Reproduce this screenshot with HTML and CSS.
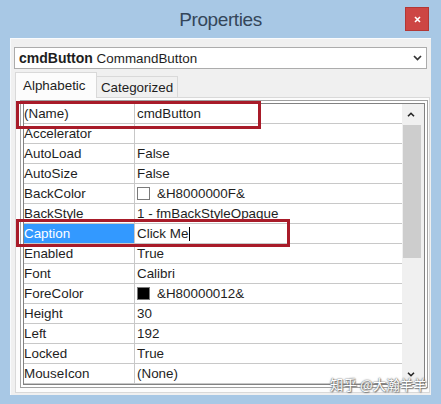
FILE: index.html
```html
<!DOCTYPE html>
<html>
<head>
<meta charset="utf-8">
<link rel="stylesheet" href="styles.css">
</head>
<body>
<div class="window">
  <div class="titlebar">
    <h1 class="title">Properties</h1>
    <div class="close"><svg width="7" height="7" viewBox="0 0 7 7"><path d="M1 1L6 6M6 1L1 6" stroke="#fff" stroke-width="1.6" fill="none"/></svg></div>
  </div>
  <div class="panel">
    <div class="combo">
      <span class="obj"><b>cmdButton</b> CommandButton</span>
      <svg width="9" height="6" viewBox="0 0 9 6"><path d="M1 1L4.5 4.5L8 1" fill="none" stroke="#333" stroke-width="1.7"/></svg>
    </div>
    <div class="tabs">
      <div class="tab active">Alphabetic</div>
      <div class="tab inactive">Categorized</div>
    </div>
    <div class="page">
      <div class="grid">
        <div class="grid-inner">
          <div class="rows">
            <div class="row"><div class="name">(Name)</div><div class="val">cmdButton</div></div>
            <div class="row"><div class="name">Accelerator</div><div class="val"></div></div>
            <div class="row"><div class="name">AutoLoad</div><div class="val">False</div></div>
            <div class="row"><div class="name">AutoSize</div><div class="val">False</div></div>
            <div class="row"><div class="name">BackColor</div><div class="val"><span class="swatch swatch-white"></span>&amp;H8000000F&amp;</div></div>
            <div class="row"><div class="name">BackStyle</div><div class="val">1 - fmBackStyleOpaque</div></div>
            <div class="row selected"><div class="name">Caption</div><div class="val">Click Me<span class="caret"></span></div></div>
            <div class="row"><div class="name">Enabled</div><div class="val">True</div></div>
            <div class="row"><div class="name">Font</div><div class="val">Calibri</div></div>
            <div class="row"><div class="name">ForeColor</div><div class="val"><span class="swatch swatch-black"></span>&amp;H80000012&amp;</div></div>
            <div class="row"><div class="name">Height</div><div class="val">30</div></div>
            <div class="row"><div class="name">Left</div><div class="val">192</div></div>
            <div class="row"><div class="name">Locked</div><div class="val">True</div></div>
            <div class="row"><div class="name">MouseIcon</div><div class="val">(None)</div></div>
          </div>
          <div class="scrollbar">
            <div class="sb-btn"><svg width="8" height="5" viewBox="0 0 8 5"><path d="M1 4.3L4 1.3L7 4.3" fill="none" stroke="#222" stroke-width="1.6"/></svg></div>
            <div class="thumb"></div>
            <div class="sb-space"></div>
            <div class="sb-btn"><svg width="8" height="5" viewBox="0 0 8 5"><path d="M1 0.7L4 3.7L7 0.7" fill="none" stroke="#222" stroke-width="1.6"/></svg></div>
          </div>
        </div>
      </div>
    </div>
    <div class="mark mark-name"></div>
    <div class="mark mark-caption"></div>
  </div>
  <div class="watermark">知乎 @大瀚羊羊</div>
</div>
</body>
</html>
```

FILE: styles.css
```css
body {
  margin: 0;
  background: #a8c8e5;
}

.window {
  position: relative;
  width: 441px;
  height: 404px;
  display: flex;
  flex-direction: column;
  background: #a8c8e5;
  font-family: "Liberation Sans", Arial, sans-serif;
  color: #1e1e1e;
  overflow: hidden;
}

.titlebar {
  height: 38px;
  display: grid;
  grid-template-columns: 1fr auto 1fr;
  align-items: start;
}

.title {
  grid-column: 2;
  margin: 0;
  padding-top: 2px;
  font-size: 19px;
  font-weight: normal;
  line-height: 36px;
  letter-spacing: -0.4px;
  color: #34465a;
}

.close {
  grid-column: 3;
  justify-self: end;
  margin: 7px 12px 0 0;
  width: 24px;
  height: 24px;
  box-sizing: border-box;
  background: #cd4644;
  border: 1px solid #b23735;
  display: flex;
  align-items: center;
  justify-content: center;
}

.panel {
  position: relative;
  flex: 1;
  margin: 0 10px 9px 10px;
  background: #f0f0f0;
  border-top: 1px solid #f9fbfd;
  border-left: 1px solid #f9fbfd;
  padding: 8px 1px 2px 3px;
  display: flex;
  flex-direction: column;
}

.combo {
  height: 22px;
  box-sizing: border-box;
  margin-right: 3px;
  border: 1px solid #acacac;
  background: #fff;
  display: flex;
  align-items: center;
  justify-content: space-between;
  padding: 0 4px;
  font-size: 13.4px;
}

.combo b {
  font-size: 14px;
}

.tabs {
  position: relative;
  z-index: 1;
  height: 25px;
  margin-top: 3px;
  margin-left: 1px;
  display: flex;
  align-items: flex-end;
}

.tab {
  box-sizing: border-box;
  height: 21px;
  border: 1px solid #d9d9d9;
  border-bottom: none;
  background: #f0f0f0;
  display: flex;
  align-items: center;
  justify-content: center;
  font-size: 13.4px;
}

.tab.active {
  width: 82px;
  height: 26px;
  margin-bottom: -1px;
  background: #fcfcfc;
  justify-content: flex-start;
  padding-left: 7px;
}

.tab.inactive {
  width: 81px;
  border-left: none;
}

.page {
  flex: 1;
  margin-left: 1px;
  border: 1px solid #d9d9d9;
  background: #fcfcfc;
  padding: 2px 1px 4px 4px;
  display: flex;
}

.grid {
  flex: 1;
  border: 1px solid #a0a0a0;
  padding: 2px;
  background: #fff;
  display: flex;
}

.grid-inner {
  flex: 1;
  border: 1px solid #828282;
  background: #fff;
  display: flex;
}

.rows {
  width: 378px;
}

.row {
  height: 20px;
  box-sizing: border-box;
  border-bottom: 1px solid #c8c8c8;
  display: flex;
  font-size: 13.4px;
}

.name {
  width: 111px;
  box-sizing: border-box;
  border-right: 1px solid #c8c8c8;
  display: flex;
  align-items: center;
  white-space: nowrap;
}

.val {
  flex: 1;
  padding-left: 2px;
  display: flex;
  align-items: center;
  white-space: nowrap;
}

.row.selected .name {
  background: #3399ff;
  color: #fff;
}

.swatch {
  width: 11px;
  height: 11px;
  border: 1px solid #7a7a7a;
  margin-right: 7px;
}

.swatch-white {
  background: #fff;
}

.swatch-black {
  background: #000;
}

.caret {
  display: inline-block;
  width: 1px;
  height: 14px;
  margin-left: 1px;
  background: #000;
}

.scrollbar {
  width: 22px;
  background: #f0f0f0;
  display: flex;
  flex-direction: column;
}

.sb-btn {
  height: 20px;
  display: flex;
  align-items: center;
  justify-content: center;
  padding-right: 4px;
}

.thumb {
  height: 133px;
  margin: 1px 3px 0 1px;
  background: #cdcdcd;
}

.sb-space {
  flex: 1;
}

.mark {
  position: absolute;
  z-index: 2;
  box-sizing: border-box;
  border: 3px solid #a81b29;
}

.mark-name {
  left: 5px;
  top: 62px;
  width: 245px;
  height: 28px;
}

.mark-caption {
  left: 5px;
  top: 180px;
  width: 274px;
  height: 28px;
}

.watermark {
  position: absolute;
  left: 330px;
  top: 376px;
  font-family: "Noto Sans CJK SC", sans-serif;
  font-size: 13.5px;
  line-height: 16px;
  color: #ffffff;
  text-shadow: 0 0 1px #6a6a6a, 0 0 2px #6a6a6a, 1px 1px 1px #888;
  white-space: nowrap;
}
```
